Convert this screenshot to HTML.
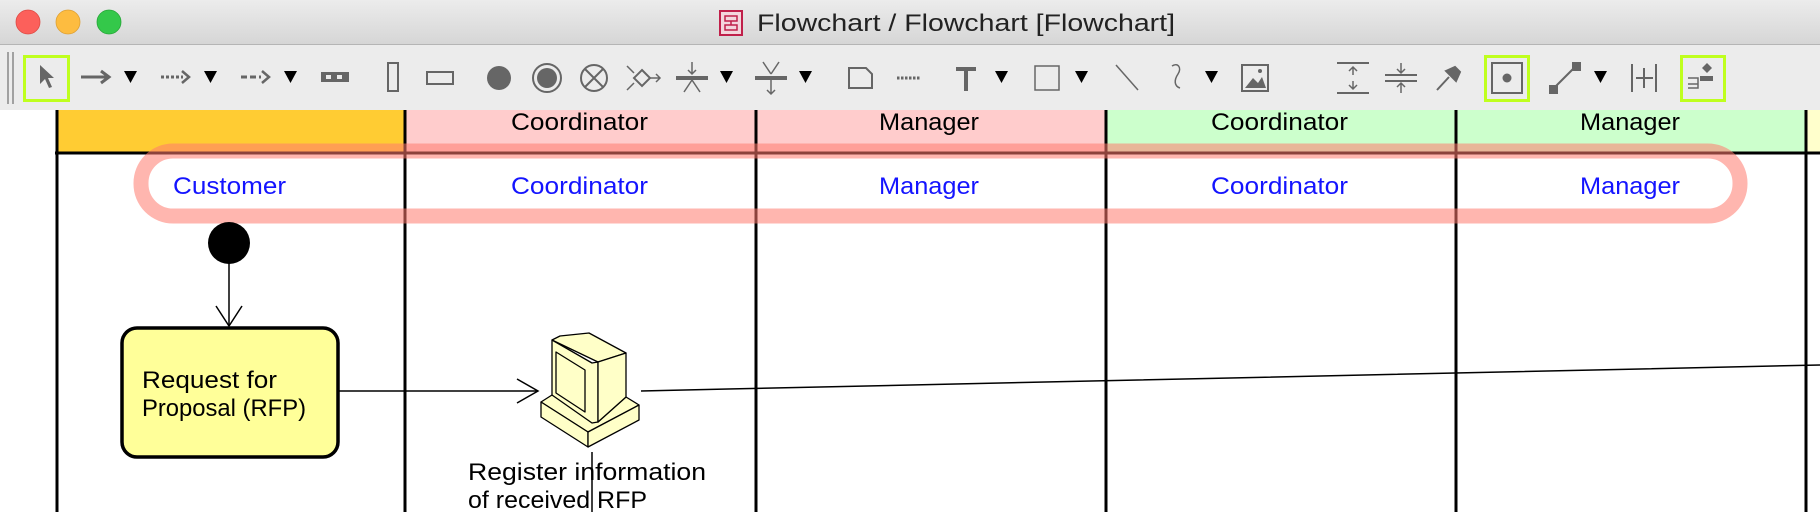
<!DOCTYPE html>
<html><head><meta charset="utf-8"><style>
html,body{margin:0;padding:0;width:1820px;height:512px;overflow:hidden;background:#fff}
svg{display:block}
text{font-family:"Liberation Sans","DejaVu Sans",sans-serif}
</style></head><body>
<svg width="1820" height="512" viewBox="0 0 1820 512" xmlns="http://www.w3.org/2000/svg">
<defs>
<linearGradient id="tb" x1="0" y1="0" x2="0" y2="1"><stop offset="0" stop-color="#ececec"/><stop offset="1" stop-color="#d6d6d6"/></linearGradient>
</defs>
<rect x="0" y="0" width="1820" height="44" fill="url(#tb)"/>
<line x1="0" y1="44.5" x2="1820" y2="44.5" stroke="#b5b5b5"/>
<circle cx="28" cy="22" r="12" fill="#fc605b" stroke="#de4a44" stroke-width="0.8"/>
<circle cx="68" cy="22" r="12" fill="#fdbc40" stroke="#dea033" stroke-width="0.8"/>
<circle cx="109" cy="22" r="12" fill="#34c84a" stroke="#27a738" stroke-width="0.8"/>
<rect x="720" y="11" width="22" height="24" fill="#f3d6dc" stroke="#c0204a" stroke-width="2"/>
<path d="M725 16h12v5h-12zM725 25h12v5h-12zM731 21v4" fill="none" stroke="#c0204a" stroke-width="1.5"/>
<text x="757" y="31" font-size="24" fill="#222" textLength="418" lengthAdjust="spacingAndGlyphs">Flowchart / Flowchart [Flowchart]</text>
<rect x="0" y="45" width="1820" height="65" fill="#ececec"/>
<line x1="8" y1="52" x2="8" y2="104" stroke="#888" stroke-width="1.5"/>
<line x1="13" y1="52" x2="13" y2="104" stroke="#888" stroke-width="1.5"/>
<rect x="24.5" y="56.5" width="44" height="44" fill="none" stroke="#bfff1e" stroke-width="3"/>
<rect x="1485.5" y="56.5" width="43" height="44" fill="none" stroke="#bfff1e" stroke-width="3"/>
<rect x="1681.5" y="56.5" width="43" height="44" fill="none" stroke="#bfff1e" stroke-width="3"/>
<g fill="#666" stroke="#666">
<path d="M40 65 L40 84 L45 79 L49 88 L52 87 L48 78 L54 78 Z" stroke="none"/>
<path d="M81 77h26" stroke-width="3" fill="none"/><path d="M101 71l8 6-8 6" stroke-width="3" fill="none"/>
<path d="M161 77h22" stroke-width="3" stroke-dasharray="3 2" fill="none"/><path d="M182 71l7 6-7 6" stroke-width="2.5" fill="none"/>
<path d="M241 77h20" stroke-width="3" stroke-dasharray="6 3" fill="none"/><path d="M262 71l7 6-7 6" stroke-width="2.5" fill="none"/>
<rect x="321" y="72" width="28" height="10" stroke="none"/>
<rect x="326" y="75" width="5" height="4" fill="#ececec" stroke="none"/><rect x="337" y="75" width="5" height="4" fill="#ececec" stroke="none"/>
<rect x="388" y="63" width="10" height="28" fill="none" stroke-width="2"/>
<rect x="427" y="72" width="26" height="12" fill="none" stroke-width="2"/>
<circle cx="499" cy="78" r="12" stroke="none"/>
<circle cx="547" cy="78" r="14" fill="none" stroke-width="2"/><circle cx="547" cy="78" r="10" stroke="none"/>
<circle cx="594" cy="78" r="13" fill="none" stroke-width="2"/><path d="M585 69l18 18M603 69l-18 18" stroke-width="2" fill="none"/>
<path d="M642 70l8 8-8 8-8-8z" fill="none" stroke-width="2"/><path d="M650 78h10M656 74l4 4-4 4M627 66l7 7M627 90l7-7" fill="none" stroke-width="1.5"/>
<rect x="676" y="76" width="32" height="4" stroke="none"/><path d="M692 62v12M688 70l4 4 4-4M692 80l-8 12M692 80l8 12" fill="none" stroke-width="1.5"/>
<rect x="755" y="76" width="32" height="4" stroke="none"/><path d="M771 80v14M767 90l4 4 4-4M763 62l8 12M779 62l-8 12" fill="none" stroke-width="1.5"/>
<path d="M849 68h17l6 6v14h-23z" fill="none" stroke-width="2"/>
<path d="M897 78h24" stroke-width="3" stroke-dasharray="2.5 1.5" fill="none"/>
<path d="M956 67h20v4h-8v20h-4v-20h-8z" stroke="none"/>
<rect x="1035" y="66" width="24" height="24" fill="none" stroke-width="1.5"/>
<path d="M1116 65l22 25" stroke-width="1.5" fill="none"/>
<path d="M1172 66c6-4 10 2 6 8s-4 12 2 14" stroke-width="1.5" fill="none"/>
<rect x="1242" y="65" width="26" height="26" fill="none" stroke-width="2"/><path d="M1245 88l8-10 5 5 4-6 4 11z" stroke="none"/><circle cx="1260" cy="71" r="2" stroke="none"/>
<path d="M1337 63h32M1337 93h32" stroke-width="2" fill="none"/><path d="M1353 67v8M1349 71l4-4 4 4M1353 81v8M1349 85l4 4 4-4" stroke-width="1.5" fill="none"/>
<path d="M1385 75h32M1385 81h32" stroke-width="2" fill="none"/><path d="M1401 63v10M1397 69l4 4 4-4M1401 83v10M1397 87l4-4 4 4" stroke-width="1.5" fill="none"/>
<path d="M1437 90l12-13M1446 71l9-4 5 5-4 9z" stroke-width="2"/>
<rect x="1492" y="63" width="30" height="30" fill="none" stroke-width="2"/><circle cx="1507" cy="78" r="4.5" stroke="none"/>
<rect x="1549" y="85" width="9" height="9" stroke="none"/><rect x="1572" y="62" width="9" height="9" stroke="none"/><path d="M1555 87l20-20" stroke-width="2" fill="none"/>
<path d="M1632 64v28M1656 64v28M1636 78h17M1644 68v20" stroke-width="2" fill="none"/>
<path d="M1688 78h10v10h-10M1688 84h10" stroke-width="1.5" fill="none"/><rect x="1700" y="76" width="13" height="5" stroke="none"/><path d="M1707 63l5 5-5 5-5-5z" stroke="none"/>
</g>
<g fill="#000">
<path d="M124 71h13l-6.5 12z"/><path d="M204 71h13l-6.5 12z"/><path d="M284 71h13l-6.5 12z"/>
<path d="M720 71h13l-6.5 12z"/><path d="M799 71h13l-6.5 12z"/><path d="M995 71h13l-6.5 12z"/>
<path d="M1075 71h13l-6.5 12z"/><path d="M1205 71h13l-6.5 12z"/><path d="M1594 71h13l-6.5 12z"/>
</g>
<rect x="57" y="110" width="348" height="43" fill="#ffcc33"/>
<rect x="405" y="110" width="701" height="43" fill="#ffcccc"/>
<rect x="1106" y="110" width="700" height="43" fill="#ccffcc"/>
<rect x="1806" y="110" width="14" height="43" fill="#ffffcc"/>
<line x1="55" y1="153" x2="1820" y2="153" stroke="#000" stroke-width="3"/>
<g stroke="#000" stroke-width="3">
<line x1="57" y1="110" x2="57" y2="512"/><line x1="405" y1="110" x2="405" y2="512"/>
<line x1="756" y1="110" x2="756" y2="512"/><line x1="1106" y1="110" x2="1106" y2="512"/>
<line x1="1456" y1="110" x2="1456" y2="512"/><line x1="1806" y1="110" x2="1806" y2="512"/>
</g>
<g font-size="24" fill="#000">
<text x="511" y="130" textLength="137" lengthAdjust="spacingAndGlyphs">Coordinator</text>
<text x="879" y="130" textLength="100" lengthAdjust="spacingAndGlyphs">Manager</text>
<text x="1211" y="130" textLength="137" lengthAdjust="spacingAndGlyphs">Coordinator</text>
<text x="1580" y="130" textLength="100" lengthAdjust="spacingAndGlyphs">Manager</text>
</g>
<rect x="141" y="151" width="1599" height="65" rx="32" fill="none" stroke="#ff7a6e" stroke-opacity="0.55" stroke-width="15"/>
<g font-size="24" fill="#1414ff">
<text x="173" y="194" textLength="113" lengthAdjust="spacingAndGlyphs">Customer</text>
<text x="511" y="194" textLength="137" lengthAdjust="spacingAndGlyphs">Coordinator</text>
<text x="879" y="194" textLength="100" lengthAdjust="spacingAndGlyphs">Manager</text>
<text x="1211" y="194" textLength="137" lengthAdjust="spacingAndGlyphs">Coordinator</text>
<text x="1580" y="194" textLength="100" lengthAdjust="spacingAndGlyphs">Manager</text>
</g>
<circle cx="229" cy="243" r="21" fill="#000"/>
<line x1="229" y1="262" x2="229" y2="326" stroke="#000" stroke-width="1.5"/>
<path d="M216 306l13 20 13-20" fill="none" stroke="#000" stroke-width="1.5"/>
<rect x="122" y="328" width="216" height="129" rx="15" fill="#ffff99" stroke="#000" stroke-width="3.5"/>
<g font-size="24" fill="#000">
<text x="142" y="388" textLength="135" lengthAdjust="spacingAndGlyphs">Request for</text>
<text x="142" y="416" textLength="164" lengthAdjust="spacingAndGlyphs">Proposal (RFP)</text>
</g>
<line x1="339" y1="391" x2="538" y2="391" stroke="#000" stroke-width="1.5"/>
<path d="M517 379l21 12-21 12" fill="none" stroke="#000" stroke-width="1.5"/>
<g fill="#ffffc8" stroke="#000" stroke-width="1.3" stroke-linejoin="round">
<path d="M541 402l47 30 51-27-13-8-28 25-46-27z"/>
<path d="M541 402v15l47 30v-15z"/><path d="M588 432l51-27v15l-51 27z"/>
<path d="M552 340l8-4 29-3 37 20-28 9z"/>
<path d="M552 340l40 23 6-1v60l-6 1-40-28z"/>
<path d="M556 352l29 18v42l-29-19z"/>
<path d="M598 362l28-9v44l-28 25z"/>
</g>
<line x1="592" y1="452" x2="592" y2="512" stroke="#000" stroke-width="1.5"/>
<path d="M641 391L728 389L1820 365" fill="none" stroke="#000" stroke-width="1.5"/>
<g font-size="24" fill="#000">
<text x="468" y="480" textLength="238" lengthAdjust="spacingAndGlyphs">Register information</text>
<text x="468" y="508" textLength="179" lengthAdjust="spacingAndGlyphs">of received RFP</text>
</g>
</svg>
</body></html>
